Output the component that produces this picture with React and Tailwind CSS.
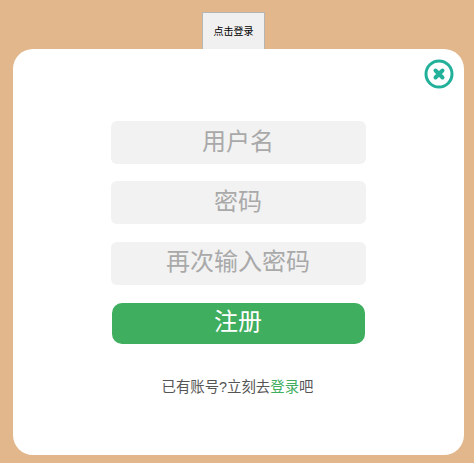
const FONT = "font-['Liberation_Sans','Noto_Sans_CJK_SC',sans-serif]";

function Field({ placeholder }) {
  return (
    <div className="h-[43px] w-[255px] flex items-center justify-center rounded-md bg-[#f2f2f2] pb-[2px] pr-[1px] text-[24px] text-[#a9a9a9]">
      {placeholder}
    </div>
  );
}

export default function App() {
  return (
    <div className={`${FONT} h-[463px] w-[474px] overflow-hidden bg-[#e1b78b] flex flex-col items-center`}>
      <button className="mt-3 mr-[7px] h-[37px] w-[63px] shrink-0 border border-[#b5b5b5] border-b-0 bg-[#f0f0f0] text-[10px] text-black">
        点击登录
      </button>
      <div className="relative ml-[3px] h-[406px] w-[451px] shrink-0 rounded-[20px] bg-white flex flex-col items-center pt-[72px]">
        <svg className="absolute right-[10px] top-[10px]" width="30" height="30" viewBox="0 0 30 30" fill="none">
          <circle cx="15" cy="15" r="13" stroke="#23b09a" strokeWidth="3" />
          <path d="M11.5 11.5l7 7M18.5 11.5l-7 7" stroke="#23b09a" strokeWidth="4" strokeLinecap="round" />
        </svg>
        <div className="flex flex-col items-center gap-[17.4px]">
          <Field placeholder="用户名" />
          <Field placeholder="密码" />
          <Field placeholder="再次输入密码" />
        </div>
        <button className="mt-[18px] h-[41px] w-[253px] rounded-[10px] bg-[#3fae5f] pb-[2px] pr-[1px] text-[24px] text-white">
          注册
        </button>
        <p className="mt-[33px] mr-[2px] text-[14.4px] leading-[20px] text-[#555555]">
          已有账号?立刻去<span className="text-[#3fae5f]">登录</span>吧
        </p>
      </div>
    </div>
  );
}
